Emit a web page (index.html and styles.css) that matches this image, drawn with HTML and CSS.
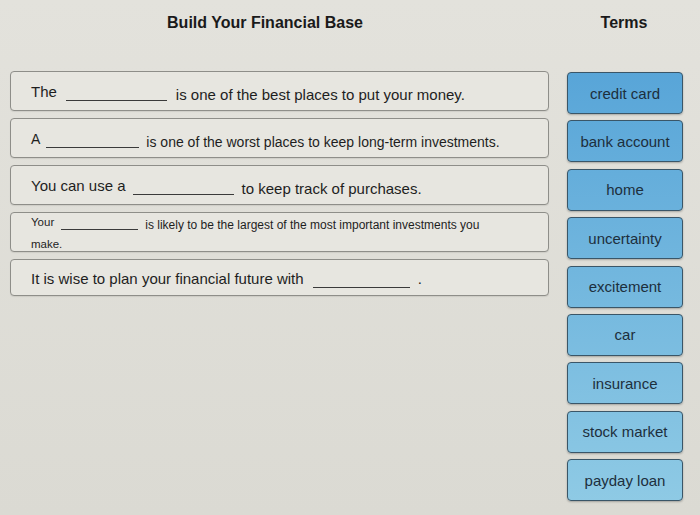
FILE: index.html
```html
<!DOCTYPE html>
<html lang="en">
<head>
    <meta charset="UTF-8">
    <meta name="viewport" content="width=device-width, initial-scale=1.0">
    <title>Build Your Financial Base</title>
    <link rel="stylesheet" href="styles.css">
</head>
<body>
    <div class="heads">
        <h1 class="title">Build Your Financial Base</h1>
        <h2 class="termsTitle">Terms</h2>
    </div>

    <div class="board">
        <div class="sentences">
            <div class="sentence s1"><span>The</span><span class="blank"></span><span class="rest">is one of the best places to put your money.</span></div>
            <div class="sentence s2"><span>A</span><span class="blank short"></span><span class="rest">is one of the worst places to keep long-term investments.</span></div>
            <div class="sentence s3"><span>You can use a</span><span class="blank"></span><span class="rest">to keep track of purchases.</span></div>
            <div class="sentence s4"><span>Your</span><span class="blank tiny"></span><span class="rest">is likely to be the largest of the most important investments you</span><br><span>make.</span></div>
            <div class="sentence s5"><span>It is wise to plan your financial future with</span><span class="blank"></span><span class="dot">.</span></div>
        </div>

        <div class="terms">
            <div class="term">credit card</div>
            <div class="term">bank account</div>
            <div class="term">home</div>
            <div class="term">uncertainty</div>
            <div class="term">excitement</div>
            <div class="term">car</div>
            <div class="term">insurance</div>
            <div class="term">stock market</div>
            <div class="term">payday loan</div>
        </div>
    </div>
</body>
</html>
```

FILE: styles.css
```css
body {
    font-family: "Liberation Sans", Arial, sans-serif;
    margin: 0;
    padding: 0;
    height: 515px;
    overflow: hidden;
    color: #1e1e1e;
    background: linear-gradient(#e3e2dc, #dbdad3);
}

.heads {
    display: grid;
    grid-template-columns: 510px 118px;
    column-gap: 43px;
    padding-left: 10px;
    height: 71px;
    box-sizing: border-box;
    padding-top: 13px;
}

.title,
.termsTitle {
    margin: 0;
    font-size: 16px;
    line-height: 19px;
    font-weight: bold;
    color: #1a1a1a;
    text-align: center;
}

.termsTitle {
    padding-left: 4px;
}

.board {
    display: grid;
    grid-template-columns: 539px 116px;
    column-gap: 18px;
    padding-left: 10px;
}

.sentences {
    display: flex;
    flex-direction: column;
    gap: 7px;
}

.sentence {
    box-sizing: border-box;
    height: 40px;
    padding: 11px 12px 0 20px;
    font-size: 15px;
    line-height: 18px;
    white-space: nowrap;
    background-color: #e7e6e0;
    border: 1px solid #8e8e89;
    border-radius: 4px;
    box-shadow: 0 1px 1px rgba(0, 0, 0, 0.08);
}

.blank {
    display: inline-block;
    width: 101px;
    height: 0;
    margin: 0 9px 0 9px;
    border-bottom: 1px solid #3a3a3a;
    vertical-align: -4px;
}

.blank.short {
    width: 93px;
    margin: 0 7px 0 6px;
}

.blank.tiny {
    width: 77px;
    margin: 0 7px;
}

.rest {
    vertical-align: -3px;
}

.s2 {
    font-size: 14px;
}

.s3 .blank {
    margin: 0 8px 0 7px;
}

.s4 {
    padding-top: 0;
    font-size: 11.5px;
    line-height: 19px;
}

.s4 .rest {
    font-size: 12px;
    vertical-align: -3px;
}

.s5 {
    height: 37px;
    padding-top: 10px;
    font-size: 15px;
}

.s5 .blank {
    width: 97px;
    margin: 0 8px 0 9px;
}

.terms {
    display: flex;
    flex-direction: column;
    gap: 6.4px;
    padding-top: 1px;
}

.term {
    box-sizing: border-box;
    height: 42px;
    display: flex;
    align-items: center;
    justify-content: center;
    font-size: 15px;
    color: #1d2f3d;
    background: linear-gradient(#4f9fd6, #90cbe5 515px) fixed;
    border: 1px solid #3a5668;
    border-radius: 4px;
    box-shadow: 0 1px 2px rgba(0, 0, 0, 0.25);
}
```
